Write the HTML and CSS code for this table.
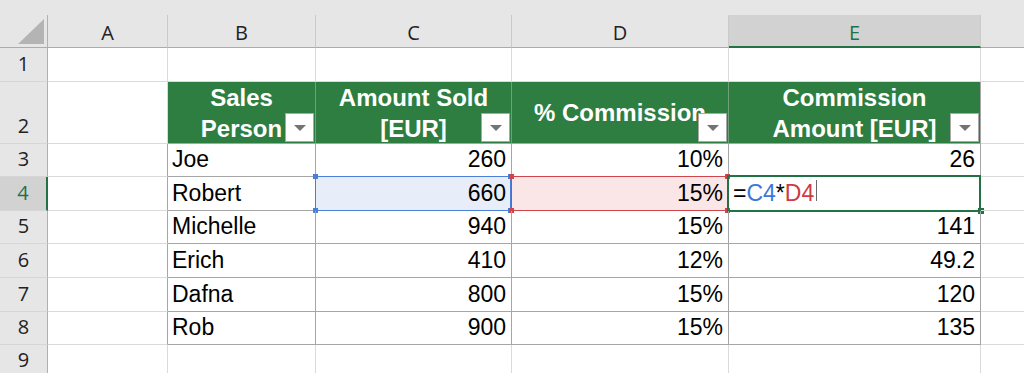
FILE: index.html
```html
<!DOCTYPE html>
<html lang="en">
<head>
  <meta charset="UTF-8">
  <title>Commission</title>
  <link rel="stylesheet" href="styles.css">
</head>
<body>

<div class="sheet">
  <div class="top-strip"></div>

  <!-- column headers -->
  <div class="corner">
    <svg width="48" height="33" viewBox="0 0 48 33"><polygon points="44,4 44,29 18,29" fill="#b4b4b4"/></svg>
  </div>
  <div class="col-head">A</div>
  <div class="col-head">B</div>
  <div class="col-head">C</div>
  <div class="col-head">D</div>
  <div class="col-head active">E</div>
  <div class="col-head last"></div>

  <!-- row 1 -->
  <div class="row-head">1</div>
  <div class="cell"></div>
  <div class="cell"></div>
  <div class="cell"></div>
  <div class="cell"></div>
  <div class="cell"></div>
  <div class="cell f"></div>

  <!-- row 2: table header -->
  <div class="row-head">2</div>
  <div class="cell"></div>
  <div class="cell th">Sales<br>Person<span class="filter"><i></i></span></div>
  <div class="cell th">Amount Sold<br>[EUR]<span class="filter"><i></i></span></div>
  <div class="cell th">% Commission<span class="filter"><i></i></span></div>
  <div class="cell th last">Commission<br>Amount [EUR]<span class="filter"><i></i></span></div>
  <div class="cell f"></div>

  <!-- row 3 -->
  <div class="row-head">3</div>
  <div class="cell edge"></div>
  <div class="cell td">Joe</div>
  <div class="cell td num">260</div>
  <div class="cell td num">10%</div>
  <div class="cell td num">26</div>
  <div class="cell f"></div>

  <!-- row 4: editing E4 -->
  <div class="row-head active">4</div>
  <div class="cell edge"></div>
  <div class="cell td">Robert</div>
  <div class="cell td num ref-c">660<span class="sel sel-blue"><b class="h tl"></b><b class="h tr"></b><b class="h bl"></b><b class="h br"></b></span></div>
  <div class="cell td num ref-d">15%<span class="sel sel-red"><b class="h tl"></b><b class="h tr"></b><b class="h bl"></b><b class="h br"></b></span></div>
  <div class="cell td"><span>=<span class="c-ref">C4</span>*<span class="d-ref">D4</span><span class="caret"></span></span><span class="sel sel-green"><b class="fill-handle"></b></span></div>
  <div class="cell f"></div>

  <!-- row 5 -->
  <div class="row-head">5</div>
  <div class="cell edge"></div>
  <div class="cell td">Michelle</div>
  <div class="cell td num">940</div>
  <div class="cell td num">15%</div>
  <div class="cell td num">141</div>
  <div class="cell f"></div>

  <!-- row 6 -->
  <div class="row-head">6</div>
  <div class="cell edge"></div>
  <div class="cell td">Erich</div>
  <div class="cell td num">410</div>
  <div class="cell td num">12%</div>
  <div class="cell td num">49.2</div>
  <div class="cell f"></div>

  <!-- row 7 -->
  <div class="row-head">7</div>
  <div class="cell edge"></div>
  <div class="cell td">Dafna</div>
  <div class="cell td num">800</div>
  <div class="cell td num">15%</div>
  <div class="cell td num">120</div>
  <div class="cell f"></div>

  <!-- row 8 -->
  <div class="row-head">8</div>
  <div class="cell edge"></div>
  <div class="cell td">Rob</div>
  <div class="cell td num">900</div>
  <div class="cell td num">15%</div>
  <div class="cell td num">135</div>
  <div class="cell f"></div>

  <!-- row 9 -->
  <div class="row-head">9</div>
  <div class="cell"></div>
  <div class="cell"></div>
  <div class="cell"></div>
  <div class="cell"></div>
  <div class="cell"></div>
  <div class="cell f"></div>
</div>

</body>
</html>
```

FILE: styles.css
```css
html, body {
  margin: 0;
  height: 373px;
  overflow: hidden;
  background: #fff;
}

.sheet {
  display: grid;
  grid-template-columns: 48px 120px 148px 196px 217px 252px 1fr;
  grid-template-rows: 15px 33px 34px 62px 33px 34px 33px 34px 34px 33px 33px;
  font-family: "Liberation Sans", Arial, sans-serif;
}

.top-strip {
  grid-column: 1 / -1;
  background: #e6e6e6;
}

.corner {
  background: #e6e6e6;
  border-right: 1px solid #b0b0b0;
  border-bottom: 1px solid #ababab;
  box-sizing: border-box;
}
.corner svg { display: block; }

/* column letters */
.col-head {
  box-sizing: border-box;
  background: #e6e6e6;
  border-right: 1px solid #cacaca;
  border-bottom: 1px solid #ababab;
  font-family: "Open Sans", sans-serif;
  font-size: 20px;
  line-height: 22px;
  color: #222;
  display: flex;
  justify-content: center;
  align-items: flex-end;
  padding-bottom: 3px;
}
.col-head.active {
  background: #d2d2d2;
  color: #217346;
  border-bottom: 2px solid #217346;
  padding-bottom: 2px;
}
.col-head.last { border-right: none; }

/* row numbers */
.row-head {
  box-sizing: border-box;
  background: #e6e6e6;
  border-right: 1px solid #b0b0b0;
  border-bottom: 1px solid #d6d6d6;
  font-family: "Open Sans", sans-serif;
  font-size: 20px;
  line-height: 22px;
  color: #222;
  display: flex;
  justify-content: center;
  align-items: flex-end;
  padding-bottom: 6px;
}
.row-head.active {
  background: #d2d2d2;
  color: #217346;
  border-right: 2px solid #217346;
}

/* cells */
.cell {
  position: relative;
  box-sizing: border-box;
  border-right: 1px solid #dadada;
  border-bottom: 1px solid #dadada;
  display: flex;
  align-items: flex-end;
  padding: 0 5px 4px 4px;
  font-size: 23px;
  line-height: 26px;
  color: #000;
  white-space: nowrap;
}
.cell.f { border-right: none; }
.cell.edge { border-right-color: #a6a6a6; }
.cell.td {
  border-right-color: #a6a6a6;
  border-bottom-color: #a6a6a6;
}
.cell.num { justify-content: flex-end; }

/* green table header */
.cell.th {
  background: #2e7d41;
  color: #fff;
  font-weight: bold;
  font-size: 24px;
  line-height: 31px;
  text-align: center;
  justify-content: center;
  align-items: center;
  padding: 0;
  border-right-color: #6f9f7a;
  border-bottom-color: #a6a6a6;
}
.cell.th.last { border-right-color: #a6a6a6; }

.filter {
  position: absolute;
  right: 1px;
  bottom: 1px;
  width: 29px;
  height: 29px;
  box-sizing: border-box;
  background: #fff;
  border: 1px solid #a8a8a8;
  display: flex;
  align-items: center;
  justify-content: center;
}
.filter i {
  width: 0;
  height: 0;
  border-left: 6px solid transparent;
  border-right: 6px solid transparent;
  border-top: 6px solid #737373;
}

/* formula references */
.ref-c { background: #e7eef9; }
.ref-d { background: #fbe6e7; }
.c-ref { color: #3c78d8; }
.d-ref { color: #d03a40; }
.caret {
  display: inline-block;
  width: 1px;
  height: 21px;
  margin-left: 2px;
  background: #6a6a6a;
}

.sel {
  position: absolute;
  box-sizing: border-box;
}
.sel-blue {
  top: -1px; left: -1px; right: 0; bottom: -1px;
  border: 1px solid #4a7fd8;
}
.sel-red {
  top: -1px; left: -1px; right: 0; bottom: -1px;
  border: 1px solid #d0444c;
}
.sel-green {
  top: -2px; left: -2px; right: -1px; bottom: -2px;
  border: 2px solid #217346;
}

.h {
  position: absolute;
  width: 5px;
  height: 5px;
}
.sel-blue .h { background: #4a7fd8; }
.sel-red .h { background: #d0444c; }
.h.tl { left: -3px; top: -3px; }
.h.tr { right: -3px; top: -3px; }
.h.bl { left: -3px; bottom: -3px; }
.h.br { right: -3px; bottom: -3px; }

.fill-handle {
  position: absolute;
  right: -5px;
  bottom: -4px;
  width: 6px;
  height: 6px;
  background: #217346;
}
```
